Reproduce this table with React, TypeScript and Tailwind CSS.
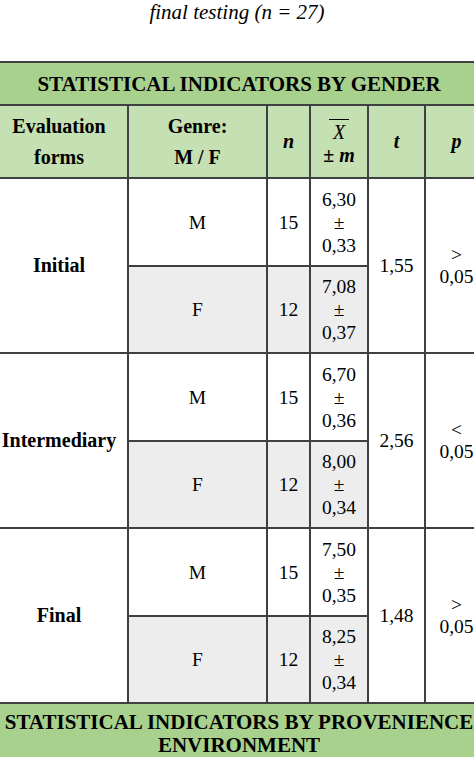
import React from 'react';

const serif = { fontFamily: '"Liberation Serif", "Times New Roman", serif' };

type Row = { g: string; n: string; mean: string; sd: string };
type Group = { label: string; t: string; sign: string; rows: Row[] };

const groups: Group[] = [
    {
        label: 'Initial',
        t: '1,55',
        sign: '>',
        rows: [
            { g: 'M', n: '15', mean: '6,30', sd: '0,33' },
            { g: 'F', n: '12', mean: '7,08', sd: '0,37' },
        ],
    },
    {
        label: 'Intermediary',
        t: '2,56',
        sign: '<',
        rows: [
            { g: 'M', n: '15', mean: '6,70', sd: '0,36' },
            { g: 'F', n: '12', mean: '8,00', sd: '0,34' },
        ],
    },
    {
        label: 'Final',
        t: '1,48',
        sign: '>',
        rows: [
            { g: 'M', n: '15', mean: '7,50', sd: '0,35' },
            { g: 'F', n: '12', mean: '8,25', sd: '0,34' },
        ],
    },
];

const cell = 'border-2 border-[#404040] text-center align-middle p-0';

const App = () => {
    return (
        <div className="w-[474px] h-[757px] overflow-hidden bg-white text-black" style={serif}>
            <div className="flex h-[61px] justify-center">
                <p className="mt-[2px] text-[21px] leading-[20px] italic">final testing (n = 27)</p>
            </div>

            <table className="-ml-[11px] w-[498px] table-fixed border-collapse">
                <colgroup>
                    <col className="w-[138px]" />
                    <col className="w-[139px]" />
                    <col className="w-[43px]" />
                    <col className="w-[58px]" />
                    <col className="w-[57px]" />
                    <col className="w-[63px]" />
                </colgroup>
                <tbody>
                    <tr className="h-[43px] bg-[#a9d18e]">
                        <td colSpan={6} className={`${cell} text-[21px] font-bold leading-[24px]`}>
                            STATISTICAL INDICATORS BY GENDER
                        </td>
                    </tr>
                    <tr className="h-[73px] bg-[#c5e0b3] text-[20px] font-bold leading-[31px]">
                        <td className={cell}>
                            Evaluation
                            <br />
                            forms
                        </td>
                        <td className={cell}>
                            Genre:
                            <br />
                            M / F
                        </td>
                        <td className={`${cell} italic`}>n</td>
                        <td className={cell}>
                            <div className="flex flex-col items-center leading-[22px]">
                                <span className="mt-[2px] border-t-[1.5px] border-black px-[4px] pt-[3px] font-normal italic leading-[18px]">
                                    X
                                </span>
                                <span className="mt-[3px]">
                                    ± <span className="italic">m</span>
                                </span>
                            </div>
                        </td>
                        <td className={`${cell} italic`}>t</td>
                        <td className={`${cell} italic`}>p</td>
                    </tr>

                    {groups.map((grp) =>
                        grp.rows.map((r, i) => (
                            <tr
                                key={grp.label + r.g}
                                className={`${i === 0 ? 'h-[88px]' : 'h-[87px]'} text-[19.5px] leading-[23px]`}
                            >
                                {i === 0 && (
                                    <td rowSpan={2} className={`${cell} bg-white text-[20px] font-bold`}>
                                        {grp.label}
                                    </td>
                                )}
                                <td className={`${cell} ${i === 1 ? 'bg-[#ededed]' : 'bg-white'}`}>{r.g}</td>
                                <td className={`${cell} ${i === 1 ? 'bg-[#ededed]' : 'bg-white'}`}>{r.n}</td>
                                <td className={`${cell} ${i === 1 ? 'bg-[#ededed]' : 'bg-white'}`}>
                                    {r.mean}
                                    <br />±<br />
                                    {r.sd}
                                </td>
                                {i === 0 && (
                                    <>
                                        <td rowSpan={2} className={`${cell} bg-white`}>
                                            {grp.t}
                                        </td>
                                        <td rowSpan={2} className={`${cell} bg-white leading-[22px]`}>
                                            {grp.sign}
                                            <br />
                                            0,05
                                        </td>
                                    </>
                                )}
                            </tr>
                        )),
                    )}

                    <tr className="h-[60px] bg-[#a9d18e]">
                        <td colSpan={6} className={`${cell} align-top pt-[7px] text-[21px] font-bold leading-[23px]`}>
                            STATISTICAL INDICATORS BY PROVENIENCE
                            <br />
                            ENVIRONMENT
                        </td>
                    </tr>
                </tbody>
            </table>
        </div>
    );
};

export default App;
